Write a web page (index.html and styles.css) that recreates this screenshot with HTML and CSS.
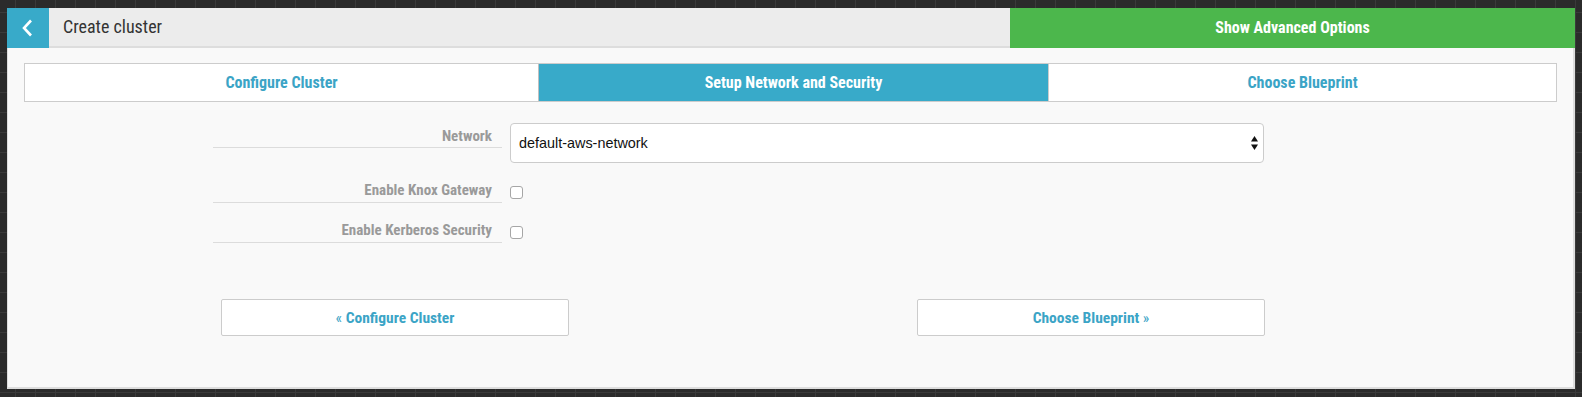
FILE: index.html
```html
<!DOCTYPE html>
<html>
<head>
<meta charset="utf-8">
<title>Create cluster</title>
<link rel="stylesheet" href="styles.css">
</head>
<body>
<div class="page">
  <div class="window">
    <div class="header">
      <a class="back" href="#">
        <svg width="12" height="18" viewBox="0 0 12 18"><polyline points="10,1.5 3,9 10,16.5" fill="none" stroke="#fff" stroke-width="2.6"/></svg>
      </a>
      <div class="title">Create cluster</div>
      <div class="advanced">Show Advanced Options</div>
    </div>
    <div class="body">
      <div class="tabs">
        <div class="tab">Configure Cluster</div>
        <div class="tab active">Setup Network and Security</div>
        <div class="tab">Choose Blueprint</div>
      </div>
      <div class="form">
        <div class="row row-select">
          <div class="label">Network</div>
          <div class="control">
            <div class="select"><span>default-aws-network</span>
              <svg class="arrows" width="7" height="14" viewBox="0 0 7 14"><polygon points="3.5,0 7,5.5 0,5.5" fill="#111"/><polygon points="0,8.5 7,8.5 3.5,14" fill="#111"/></svg>
            </div>
          </div>
        </div>
        <div class="row">
          <div class="label">Enable Knox Gateway</div>
          <div class="control"><span class="checkbox"></span></div>
        </div>
        <div class="row">
          <div class="label">Enable Kerberos Security</div>
          <div class="control"><span class="checkbox"></span></div>
        </div>
      </div>
      <div class="buttons">
        <a class="btn" href="#"><span class="raq">«</span> Configure Cluster</a>
        <span></span>
        <a class="btn" href="#">Choose Blueprint <span class="raq">»</span></a>
      </div>
    </div>
  </div>
</div>
</body>
</html>
```
FILE: styles.css
```css
html, body {
  margin: 0;
  padding: 0;
}
body {
  width: 1582px;
  height: 397px;
  overflow: hidden;
  background-color: #2b2b2b;
  background-image:
    linear-gradient(#3a3a3a 1px, transparent 1px),
    linear-gradient(90deg, #3a3a3a 1px, transparent 1px);
  background-size: 20px 20px;
  background-position: 15px 12px;
  font-family: "Roboto Condensed", "Liberation Sans Narrow", "Arial Narrow", "DejaVu Sans Condensed", Roboto, sans-serif;
}
.page {
  padding: 8px 7px 9px 7px;
}
.window {
  width: 1568px;
}
.header {
  display: flex;
  height: 40px;
}
.back {
  width: 42px;
  background: #38aac9;
  display: flex;
  align-items: center;
  justify-content: center;
}
.back svg { display: block; margin-left: -2px; }
.title {
  flex: 1;
  background: #ececec;
  border-bottom: 2px solid #dddddd;
  padding-left: 14px;
  line-height: 38px;
  font-size: 18px;
  color: #333;
}
.advanced {
  width: 565px;
  background: #4cb74c;
  color: #fff;
  font-weight: bold;
  font-size: 16px;
  text-align: center;
  line-height: 40px;
}
.body {
  background: #f9f9f9;
  border-left: 1px solid #dedede;
  border-right: 2px solid #dedede;
  border-bottom: 2px solid #dedede;
  padding: 15px 16px 51px 16px;
}
.tabs {
  display: grid;
  grid-template-columns: 513px 510px 1fr;
  border: 1px solid #cccccc;
  background: #fff;
  height: 37px;
}
.tab {
  display: flex;
  align-items: center;
  justify-content: center;
  font-weight: bold;
  font-size: 16px;
  color: #3ba4c6;
}
.tab + .tab {
  border-left: 1px solid #cccccc;
}
.tab.active {
  background: #38aac9;
  color: #fff;
  border-left-color: #c0c0c0;
}
.form {
  padding-top: 21px;
  padding-left: 189px;
}
.row {
  display: grid;
  grid-template-columns: 289px 754px;
  column-gap: 8px;
  margin-bottom: 15px;
}
.label {
  height: 22px;
  padding-top: 2px;
  border-bottom: 1px solid #dcdcdc;
  text-align: right;
  padding-right: 10px;
  font-weight: bold;
  font-size: 15px;
  line-height: 20px;
  color: #9a9a9a;
}
.row-select .label {
  height: 21px;
  padding-top: 3px;
}
.control {
  display: flex;
  align-items: flex-start;
}
.select {
  flex: 1;
  height: 38px;
  border: 1px solid #cccccc;
  border-radius: 4px;
  background: #fff;
  display: flex;
  align-items: center;
  justify-content: space-between;
  padding: 0 5px 0 8px;
  font-family: "Liberation Sans", Arial, sans-serif;
  font-size: 14.4px;
  color: #111;
}
.arrows { display: block; }
.checkbox {
  display: block;
  margin-top: 8px;
  width: 11px;
  height: 11px;
  border: 1px solid #a6a6a6;
  border-radius: 3px;
  background: #fff;
}
.buttons {
  display: grid;
  grid-template-columns: repeat(3, 348px);
  padding-left: 197px;
  margin-top: 56px;
}
.btn {
  display: flex;
  align-items: center;
  justify-content: center;
  height: 35px;
  border: 1px solid #cccccc;
  border-radius: 2px;
  background: #fff;
  color: #3ba4c6;
  font-weight: bold;
  font-size: 15.5px;
  text-decoration: none;
  white-space: pre;
}
.raq {
  font-weight: normal;
}
```
